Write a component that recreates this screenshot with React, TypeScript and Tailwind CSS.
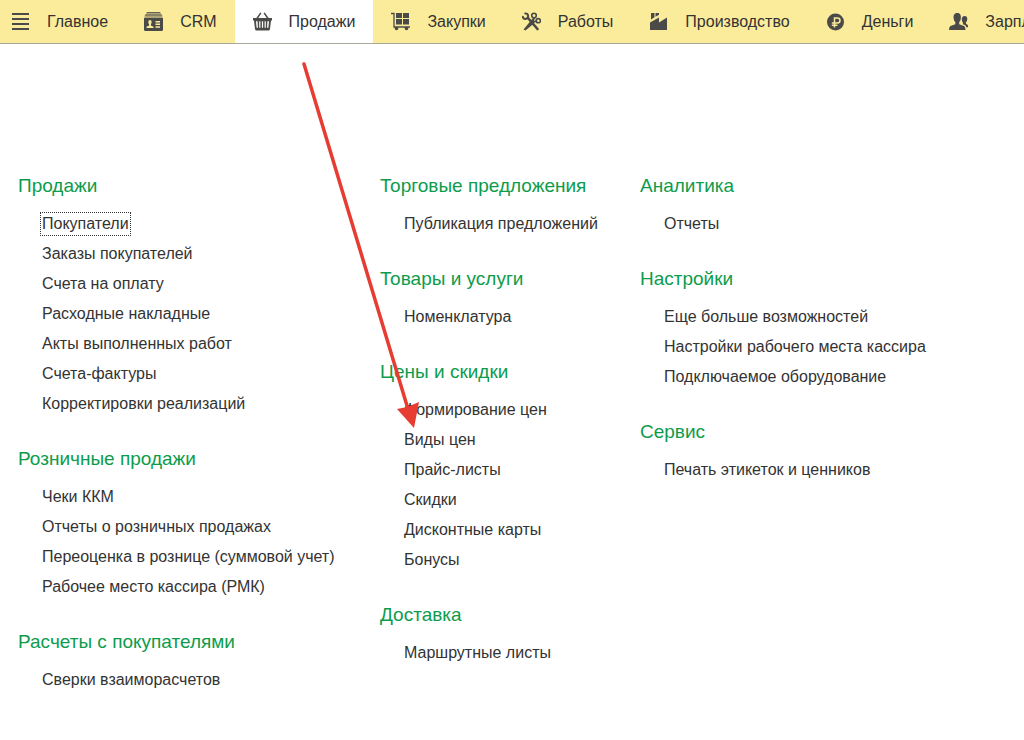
import type { ReactNode } from 'react';

interface Section {
  title: string;
  items: string[];
}

interface Tab {
  label: string;
  icon: ReactNode;
}

const tabs: Tab[] = [
  {
    label: 'Главное',
    icon: <path d="M1 1h17v2H1zM1 6h17v2H1zM1 11h17v2H1zM1 16h17v2H1z" />,
  },
  {
    label: 'CRM',
    icon: (
      <>
        <path d="M3 0h13l1 1.500H2zM1.500 2.300h16l1 1.500h-18zM.5 4.500h18v1H.5z" opacity=".85" />
        <path
          fillRule="evenodd"
          d="M0 6h19v11.500q0 1.500-1.500 1.500h-16Q0 19 0 17.500zM6 8c-2 0-2 3-.9 4.300V13.500L2.500 14.700V16h7v-1.300L6.900 13.500v-1.200C8 11 8 8 6 8zM11.500 9v1.400H16V9zM11.500 11.600V13H16v-1.400zM11.500 14.300v1.400H16v-1.400z"
        />
      </>
    ),
  },
  {
    label: 'Продажи',
    icon: (
      <>
        <path d="M4 6.500L7.500 1.300M15 6.500L11.500 1.300" stroke="currentColor" strokeWidth="1.500" strokeLinecap="round" />
        <path
          fillRule="evenodd"
          d="M0 6h19v2.500h-1L17 17q-.2 1.500-1.700 1.500H3.700Q2.200 18.500 2 17L1 8.500H0zM3 9.300l.6 6.500h1.300L4.600 9.300zM6.200 9.300v6.500h1.200V9.300zM8.900 9.300v6.500h1.200V9.300zM11.600 9.300v6.500h1.200V9.300zM14.400 9.300l-.3 6.500h1.300l.6-6.500z"
        />
      </>
    ),
  },
  {
    label: 'Закупки',
    icon: (
      <>
        <path d="M0 1.500h3V15h16" stroke="currentColor" strokeWidth="1.300" fill="none" />
        <path d="M5 1h6v5H5zM12 1h6v5h-6zM5 7h6v5.500H5zM12 7h6v5.500h-6z" />
        <circle cx="5.500" cy="16.500" r="1.800" />
        <circle cx="15.500" cy="16.500" r="1.800" />
      </>
    ),
  },
  {
    label: 'Работы',
    icon: (
      <>
        <path
          d="M3.200 1.500A2.700 2.700 0 1 1 .8 4.800"
          stroke="currentColor"
          strokeWidth="2"
          strokeLinecap="round"
          fill="none"
        />
        <path d="M6 6L15.500 17" stroke="currentColor" strokeWidth="2.600" strokeLinecap="round" />
        <path d="M10.500 6.500l2 4.500L3.500 18.500 1.500 17.500z" />
        <path d="M11 9l1.500-4M11 10l4-1" stroke="currentColor" strokeWidth="1.800" />
        <circle cx="12" cy="3.500" r="2.300" stroke="currentColor" strokeWidth="1.600" fill="none" />
        <circle cx="16.300" cy="8.700" r="2.100" stroke="currentColor" strokeWidth="1.600" fill="none" />
      </>
    ),
  },
  {
    label: 'Производство',
    icon: <path d="M2 1h3.500v4.300L2 7.500zM6.500 1H10v1.700L6.500 4.800zM1 10.500l9-5v5l8-5V18H1z" />,
  },
  {
    label: 'Деньги',
    icon: (
      <>
        <circle cx="9.500" cy="10" r="8.500" />
        <path d="M8.500 15.500V6h3a2.400 2.400 0 0 1 0 5H5.800M5.800 13.200h5.700" stroke="#fbec9c" strokeWidth="1.500" fill="none" />
      </>
    ),
  },
  {
    label: 'Зарплата',
    icon: (
      <>
        <path d="M8.200 1C5 1 4.200 3.500 4.700 6.500c.2 1.700.8 2.800 1.600 3.600v2.200L1.500 14Q0 14.700 0 18h16.500q0-3.300-1.500-4l-4.800-1.700v-2.200c.8-.8 1.400-1.900 1.600-3.600C12.200 3.500 11.500 1 8.200 1z" />
        <path d="M15.500 4c2.400 0 3 1.700 2.700 3.700-.2 1.300-.6 2-1.200 2.600v1.500l1.500.9q.8.800.8 2.500h-2q-.3-1.600-1.700-2.200l-1.700-.7v-1.800c-.6-.6-1-1.500-1.100-2.800C12.700 5.500 13.500 4 15.500 4z" />
      </>
    ),
  },
];

const columns: Section[][] = [
  [
    {
      title: 'Продажи',
      items: [
        'Покупатели',
        'Заказы покупателей',
        'Счета на оплату',
        'Расходные накладные',
        'Акты выполненных работ',
        'Счета-фактуры',
        'Корректировки реализаций',
      ],
    },
    {
      title: 'Розничные продажи',
      items: [
        'Чеки ККМ',
        'Отчеты о розничных продажах',
        'Переоценка в рознице (суммовой учет)',
        'Рабочее место кассира (РМК)',
      ],
    },
    { title: 'Расчеты с покупателями', items: ['Сверки взаиморасчетов'] },
  ],
  [
    { title: 'Торговые предложения', items: ['Публикация предложений'] },
    { title: 'Товары и услуги', items: ['Номенклатура'] },
    {
      title: 'Цены и скидки',
      items: ['Формирование цен', 'Виды цен', 'Прайс-листы', 'Скидки', 'Дисконтные карты', 'Бонусы'],
    },
    { title: 'Доставка', items: ['Маршрутные листы'] },
  ],
  [
    { title: 'Аналитика', items: ['Отчеты'] },
    {
      title: 'Настройки',
      items: ['Еще больше возможностей', 'Настройки рабочего места кассира', 'Подключаемое оборудование'],
    },
    { title: 'Сервис', items: ['Печать этикеток и ценников'] },
  ],
];

const activeTab = 'Продажи';
const focusedItem = 'Покупатели';

function TabBar() {
  return (
    <nav className="flex h-11 overflow-hidden border-b border-[#a9a797] bg-[#fbec9c]">
      {tabs.map((tab) => (
        <button
          key={tab.label}
          type="button"
          className={`flex shrink-0 items-center gap-[17px] px-[18px] text-base first:pl-[11px] ${
            tab.label === activeTab ? 'bg-white' : ''
          }`}
        >
          <svg viewBox="0 0 19 19" className="size-[19px] text-[#4a4a48]" fill="currentColor" aria-hidden="true">
            {tab.icon}
          </svg>
          {tab.label}
        </button>
      ))}
    </nav>
  );
}

function MenuSection({ title, items }: Section) {
  return (
    <section>
      <h2 className="mb-[11px] text-[19px] leading-6 text-[#0d9c4c]">{title}</h2>
      <ul className="pl-[22px]">
        {items.map((item) => (
          <li key={item} className="flex h-[30px] items-center">
            <a
              href="#"
              className={`border border-dotted px-px leading-[22px] whitespace-nowrap ${
                item === focusedItem ? 'border-[#333333]' : 'border-transparent'
              }`}
            >
              {item}
            </a>
          </li>
        ))}
      </ul>
    </section>
  );
}

function Arrow() {
  return (
    <svg
      className="pointer-events-none absolute top-0 left-0"
      width="440"
      height="440"
      viewBox="0 0 440 440"
      aria-hidden="true"
    >
      <path d="M304 64L408 409" stroke="#e63c32" strokeWidth="3.500" strokeLinecap="round" />
      <path d="M414 428L397 409L407 407L419 402Z" fill="#e63c32" />
    </svg>
  );
}

export default function App() {
  return (
    <div className="relative min-h-screen bg-white font-['Liberation_Sans',Arial,sans-serif] text-base text-[#333333]">
      <TabBar />
      <main className="grid grid-cols-[362fr_260fr_384fr] pt-[130px] pb-8 pl-[18px]">
        {columns.map((sections) => (
          <div key={sections[0].title} className="flex min-w-0 flex-col gap-7">
            {sections.map((section) => (
              <MenuSection key={section.title} {...section} />
            ))}
          </div>
        ))}
      </main>
      <Arrow />
    </div>
  );
}
